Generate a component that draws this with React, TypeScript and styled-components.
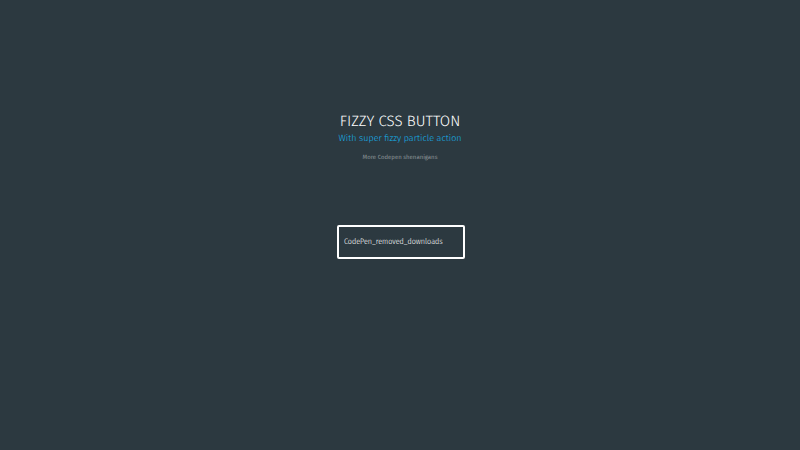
import React from "react";
import styled, { createGlobalStyle } from "styled-components";

const GlobalStyle = createGlobalStyle`
  * { box-sizing: border-box; }
  body {
    margin: 0;
    background: #2c3940;
    font-family: "Fira Sans", "Noto Sans", sans-serif;
    font-weight: 300;
    text-rendering: geometricPrecision;
  }
`;

const Page = styled.main`
  display: flex;
  flex-direction: column;
  align-items: center;
  padding-top: 111px;
`;

const Title = styled.h1`
  margin: 0;
  color: #fff;
  font-size: 15px;
  line-height: 20px;
  font-weight: 300;
  text-transform: uppercase;
`;

const Subtitle = styled.h2`
  margin: 0;
  color: #14b4ee;
  font-size: 9px;
  line-height: 16px;
  font-weight: 300;
`;

const MoreLink = styled.a`
  margin-top: 5px;
  color: #8a9296;
  font-size: 6px;
  line-height: 10px;
  font-weight: 400;
  text-decoration: none;
`;

const DownloadButton = styled.button`
  width: 128px;
  height: 34px;
  margin: 63px 0 0 2px;
  padding: 2px 5px 0;
  border: 2px solid #fff;
  border-radius: 2px;
  background: transparent;
  color: #fff;
  font: 300 8px/14px "Fira Sans Condensed", "Fira Sans", "Noto Sans", sans-serif;
  text-align: left;
  text-rendering: inherit;
  cursor: pointer;
`;

export default function App() {
  return (
    <>
      <GlobalStyle />
      <Page>
        <Title>Fizzy CSS Button</Title>
        <Subtitle>With super fizzy particle action</Subtitle>
        <MoreLink href="#">More Codepen shenanigans</MoreLink>
        <DownloadButton type="button">CodePen_removed_downloads</DownloadButton>
      </Page>
    </>
  );
}
